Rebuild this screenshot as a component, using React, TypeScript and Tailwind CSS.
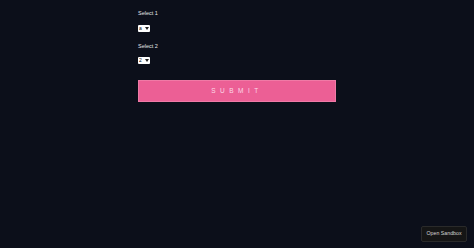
import React from "react";

function MiniSelect({ value }: { value: string }) {
  return (
    <div className="h-[7px] w-[12px] bg-white rounded-[1px] flex items-center justify-between pl-[1px] pr-[1px]">
      <span className="text-[5px] leading-[5px] text-black">{value}</span>
      <svg width="4" height="3" viewBox="0 0 4 3"><path d="M0 0L4 0L2 3Z" fill="#222" /></svg>
    </div>
  );
}

export default function App() {
  return (
    <div className="relative w-[474px] h-[248px] bg-[#0c0f1a] overflow-hidden" style={{ fontFamily: '"Liberation Sans", Arial, sans-serif' }}>
      <div className="ml-[138px] w-[198px] pt-[10px] flex flex-col">
        <label className="text-[5.5px] leading-[6px] text-[#e5e7eb]">Select 1</label>
        <div className="mt-[9px]">
          <MiniSelect value="a" />
        </div>
        <label className="mt-[11px] text-[5.5px] leading-[6px] text-[#e5e7eb]">Select 2</label>
        <div className="mt-[8px]">
          <MiniSelect value="2" />
        </div>
        <button className="mt-[16px] h-[22px] w-[198px] bg-[#ec5f95] border border-[#f07aa6] flex items-center justify-center text-[6.5px] tracking-[4.5px] text-[#fcd9e7]">
          SUBMIT
        </button>
      </div>
      <div className="absolute left-[421px] top-[226px] w-[46px] h-[16px] bg-[#151515] border border-[#2a2a2a] rounded-[2px] flex items-center justify-center text-[5.25px] text-[#d4d4d4]">
        Open Sandbox
      </div>
    </div>
  );
}
